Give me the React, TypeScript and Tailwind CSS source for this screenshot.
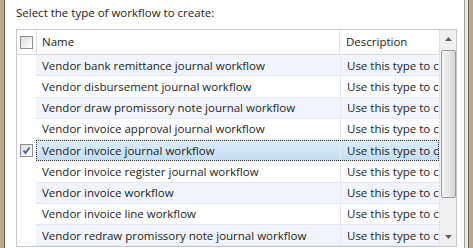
import React from "react";

const rows = [
  "Vendor bank remittance journal workflow",
  "Vendor disbursement journal workflow",
  "Vendor draw promissory note journal workflow",
  "Vendor invoice approval journal workflow",
  "Vendor invoice journal workflow",
  "Vendor invoice register journal workflow",
  "Vendor invoice workflow",
  "Vendor invoice line workflow",
  "Vendor redraw promissory note journal workflow",
];

function CheckBox({ checked }: { checked?: boolean }) {
  return (
    <div className="w-[13px] h-[13px] border border-[#8f8f8f] bg-gradient-to-br from-[#dcdcdc] to-[#ffffff] flex items-center justify-center">
      {checked && (
        <svg width="9" height="9" viewBox="0 0 9 9">
          <path d="M1.5 4.5 L3.5 7 L7.5 1.5" stroke="#4a5f97" strokeWidth="1.8" fill="none" />
        </svg>
      )}
    </div>
  );
}

export default function App() {
  const selected = 4;
  return (
    <div
      className="w-[473px] h-[248px] flex overflow-hidden bg-white text-[11.5px] text-[#1e1e1e]"
      style={{ fontFamily: '"Open Sans", "Noto Sans", sans-serif' }}
    >
      <div className="w-[5px] shrink-0 bg-[#b6a888] border-r border-[#6b604c]" />
      <div className="flex-1 min-w-0 flex flex-col pl-[11px] pr-[7px] pt-[4px]">
        <div className="h-[20px] leading-[18px]">Select the type of workflow to create:</div>
        <div className="flex border border-[#c9c9c9] mt-[5px] bg-white">
          <div className="flex-1 flex flex-col min-w-0">
            {/* header */}
            <div className="flex h-[25px] shrink-0 border-b border-[#d9d9d9]">
              <div className="w-[19px] shrink-0 flex items-center justify-center">
                <CheckBox />
              </div>
              <div className="w-[303px] shrink-0 border-l border-[#e3e3e3] pl-[5px] flex items-center">Name</div>
              <div className="flex-1 min-w-0 border-l border-[#e3e3e3] pl-[6px] flex items-center whitespace-nowrap overflow-hidden">
                Description
              </div>
            </div>
            {rows.map((r, i) => {
              const sel = i === selected;
              const alt = i % 2 === 0;
              return (
                <div key={r} className="flex h-[21.25px] shrink-0">
                  <div className="w-[19px] shrink-0 flex items-center justify-center">{sel && <CheckBox checked />}</div>
                  <div
                    className={
                      "flex-1 flex min-w-0 " +
                      (sel
                        ? "bg-gradient-to-b from-[#dcedfc] to-[#c3def5] outline outline-1 outline-dotted outline-[#333] -outline-offset-1"
                        : alt
                        ? "bg-[#f1f5fb] border-b border-[#e4e9f1]"
                        : "bg-white border-b border-[#e4e9f1]")
                    }
                  >
                    <div className="w-[304px] shrink-0 pl-[6px] flex items-center whitespace-nowrap overflow-hidden">{r}</div>
                    <div className="flex-1 min-w-0 border-l border-[#e6e9ee] pl-[6px] flex items-center whitespace-nowrap overflow-hidden">
                      Use this type to create
                    </div>
                  </div>
                </div>
              );
            })}
          </div>
          {/* scrollbar */}
          <div className="w-[17px] shrink-0 bg-[#f0f0f0] border-l border-[#e5e5e5] flex flex-col items-center">
            <div className="h-[18px] flex items-center justify-center">
              <svg width="7" height="4" viewBox="0 0 7 4">
                <path d="M0 4 L3.5 0 L7 4 Z" fill="#606060" />
              </svg>
            </div>
            <div className="w-[15px] h-[148px] mt-[2px] rounded-[2px] border border-[#9a9a9a] bg-gradient-to-r from-[#f3f3f3] via-[#e6e6e6] to-[#d6d6d6]" />
            <div className="flex-1" />
            <div className="h-[18px] flex items-center justify-center">
              <svg width="7" height="4" viewBox="0 0 7 4">
                <path d="M0 0 L3.5 4 L7 0 Z" fill="#606060" />
              </svg>
            </div>
          </div>
        </div>
      </div>
      <div className="w-[9px] shrink-0 flex">
        <div className="w-[4px] bg-[#e8e8e8] border-l border-[#9c9c9c]" />
        <div className="flex-1 bg-[#b6a888] border-l border-[#6b604c]" />
      </div>
    </div>
  );
}
